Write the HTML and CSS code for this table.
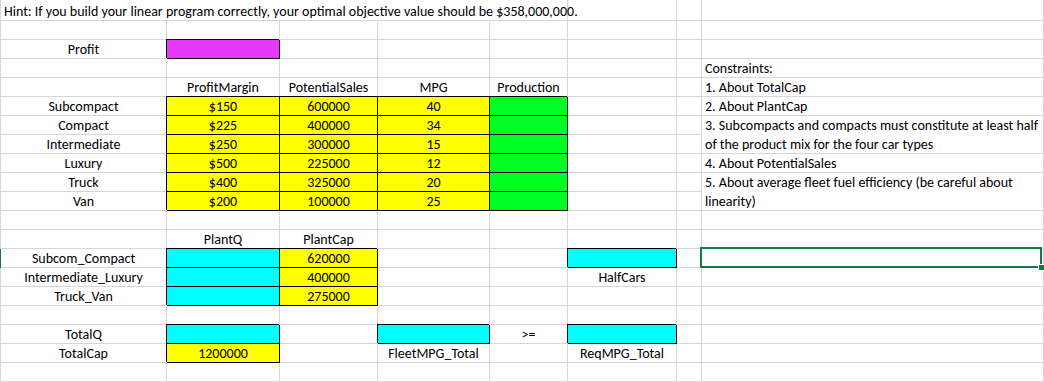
FILE: index.html
```html
<!DOCTYPE html>
<html>
<head>
<meta charset="utf-8">
<link rel="stylesheet" href="styles.css">
</head>
<body>
<div class="sheet">
  <!-- row 1 -->
  <div class="c hint">Hint: If you build your linear program correctly, your optimal objective value should be $358,000,000.</div>
  <div class="c"></div><div class="c"></div><div class="c"></div>
  <!-- row 2 -->
  <div class="c"></div><div class="c"></div><div class="c"></div><div class="c"></div><div class="c"></div><div class="c"></div><div class="c"></div><div class="c"></div>
  <!-- row 3 -->
  <div class="c ctr">Profit</div><div class="c box mag"></div><div class="c"></div><div class="c"></div><div class="c"></div><div class="c"></div><div class="c"></div><div class="c"></div>
  <!-- row 4 -->
  <div class="c"></div><div class="c"></div><div class="c"></div><div class="c"></div><div class="c"></div><div class="c"></div><div class="c"></div><div class="c note">Constraints:</div>
  <!-- row 5 -->
  <div class="c"></div><div class="c ctr">ProfitMargin</div><div class="c ctr">PotentialSales</div><div class="c ctr">MPG</div><div class="c ctr">Production</div><div class="c"></div><div class="c"></div><div class="c note">1. About TotalCap</div>
  <!-- row 6 -->
  <div class="c ctr">Subcompact</div><div class="c ctr box yel">$150</div><div class="c ctr box yel">600000</div><div class="c ctr box yel">40</div><div class="c box grn"></div><div class="c"></div><div class="c"></div><div class="c note">2. About PlantCap</div>
  <!-- row 7 -->
  <div class="c ctr">Compact</div><div class="c ctr box yel">$225</div><div class="c ctr box yel">400000</div><div class="c ctr box yel">34</div><div class="c box grn"></div><div class="c"></div><div class="c"></div><div class="c note wrap">3. Subcompacts and compacts must constitute at least half of the product mix for the four car types</div>
  <!-- row 8 -->
  <div class="c ctr">Intermediate</div><div class="c ctr box yel">$250</div><div class="c ctr box yel">300000</div><div class="c ctr box yel">15</div><div class="c box grn"></div><div class="c"></div><div class="c"></div>
  <!-- row 9 -->
  <div class="c ctr">Luxury</div><div class="c ctr box yel">$500</div><div class="c ctr box yel">225000</div><div class="c ctr box yel">12</div><div class="c box grn"></div><div class="c"></div><div class="c"></div><div class="c note">4. About PotentialSales</div>
  <!-- row 10 -->
  <div class="c ctr">Truck</div><div class="c ctr box yel">$400</div><div class="c ctr box yel">325000</div><div class="c ctr box yel">20</div><div class="c box grn"></div><div class="c"></div><div class="c"></div><div class="c note wrap">5. About average fleet fuel efficiency (be careful about linearity)</div>
  <!-- row 11 -->
  <div class="c ctr">Van</div><div class="c ctr box yel">$200</div><div class="c ctr box yel">100000</div><div class="c ctr box yel">25</div><div class="c box grn"></div><div class="c"></div><div class="c"></div>
  <!-- row 12 -->
  <div class="c"></div><div class="c"></div><div class="c"></div><div class="c"></div><div class="c"></div><div class="c"></div><div class="c"></div><div class="c"></div>
  <!-- row 13 -->
  <div class="c"></div><div class="c ctr">PlantQ</div><div class="c ctr">PlantCap</div><div class="c"></div><div class="c"></div><div class="c"></div><div class="c"></div><div class="c"></div>
  <!-- row 14 -->
  <div class="c ctr rowsel">Subcom_Compact</div><div class="c box cyn"></div><div class="c ctr box yel">620000</div><div class="c"></div><div class="c"></div><div class="c box cyn"></div><div class="c"></div><div class="c active"></div>
  <!-- row 15 -->
  <div class="c ctr">Intermediate_Luxury</div><div class="c box cyn"></div><div class="c ctr box yel">400000</div><div class="c"></div><div class="c"></div><div class="c ctr">HalfCars</div><div class="c"></div><div class="c"></div>
  <!-- row 16 -->
  <div class="c ctr">Truck_Van</div><div class="c box cyn"></div><div class="c ctr box yel">275000</div><div class="c"></div><div class="c"></div><div class="c"></div><div class="c"></div><div class="c"></div>
  <!-- row 17 -->
  <div class="c"></div><div class="c"></div><div class="c"></div><div class="c"></div><div class="c"></div><div class="c"></div><div class="c"></div><div class="c"></div>
  <!-- row 18 -->
  <div class="c ctr">TotalQ</div><div class="c box cyn"></div><div class="c"></div><div class="c box cyn"></div><div class="c ctr">&gt;=</div><div class="c box cyn"></div><div class="c"></div><div class="c"></div>
  <!-- row 19 -->
  <div class="c ctr">TotalCap</div><div class="c ctr box yel">1200000</div><div class="c"></div><div class="c ctr">FleetMPG_Total</div><div class="c"></div><div class="c ctr">ReqMPG_Total</div><div class="c"></div><div class="c"></div>
  <!-- row 20 -->
  <div class="c"></div><div class="c"></div><div class="c"></div><div class="c"></div><div class="c"></div><div class="c"></div><div class="c"></div><div class="c"></div>
</div>
</body>
</html>
```

FILE: styles.css
```css
html, body {
  margin: 0;
  padding: 0;
  background: #ffffff;
  overflow: hidden;
}

.sheet {
  display: grid;
  grid-template-columns: 166px 113px 98px 112px 78px 109px 25px 342px;
  grid-template-rows: 21px repeat(19, 19px);
  width: 1043px;
  border-left: 1px solid #d6d6d6;
  font-family: "Carlito", "Lato", sans-serif;
  font-size: 14px;
  color: #000;
}

.c {
  box-sizing: border-box;
  border-right: 1px solid #d6d6d6;
  border-bottom: 1px solid #d6d6d6;
  line-height: 18px;
  white-space: nowrap;
  overflow: visible;
  padding-top: 1px;
}

.hint {
  grid-column: span 5;
  padding-left: 3px;
  line-height: 20px;
  padding-top: 2px;
}

.ctr {
  text-align: center;
}

.note {
  padding-left: 3px;
}

.wrap {
  grid-row: span 2;
  white-space: normal;
  line-height: 19px;
  padding-top: 0;
}

.box {
  border-right-color: #000;
  border-bottom-color: #000;
  box-shadow: -1px -1px 0 0 #000;
}

.mag { background: #e63bff; }
.yel { background: #ffff00; }
.grn { background: #00ff22; }
.cyn { background: #00ffff; }

.rowsel {
  box-shadow: -1px 0 0 0 #1e7145;
}

.active {
  position: relative;
}

.active::before {
  content: "";
  position: absolute;
  left: -2px;
  top: -2px;
  right: 1px;
  bottom: -1px;
  border: 2px solid #107c41;
}

.active::after {
  content: "";
  position: absolute;
  right: -1px;
  bottom: -3px;
  width: 5px;
  height: 5px;
  background: #107c41;
  box-shadow: 0 0 0 1px #ffffff;
}
```
